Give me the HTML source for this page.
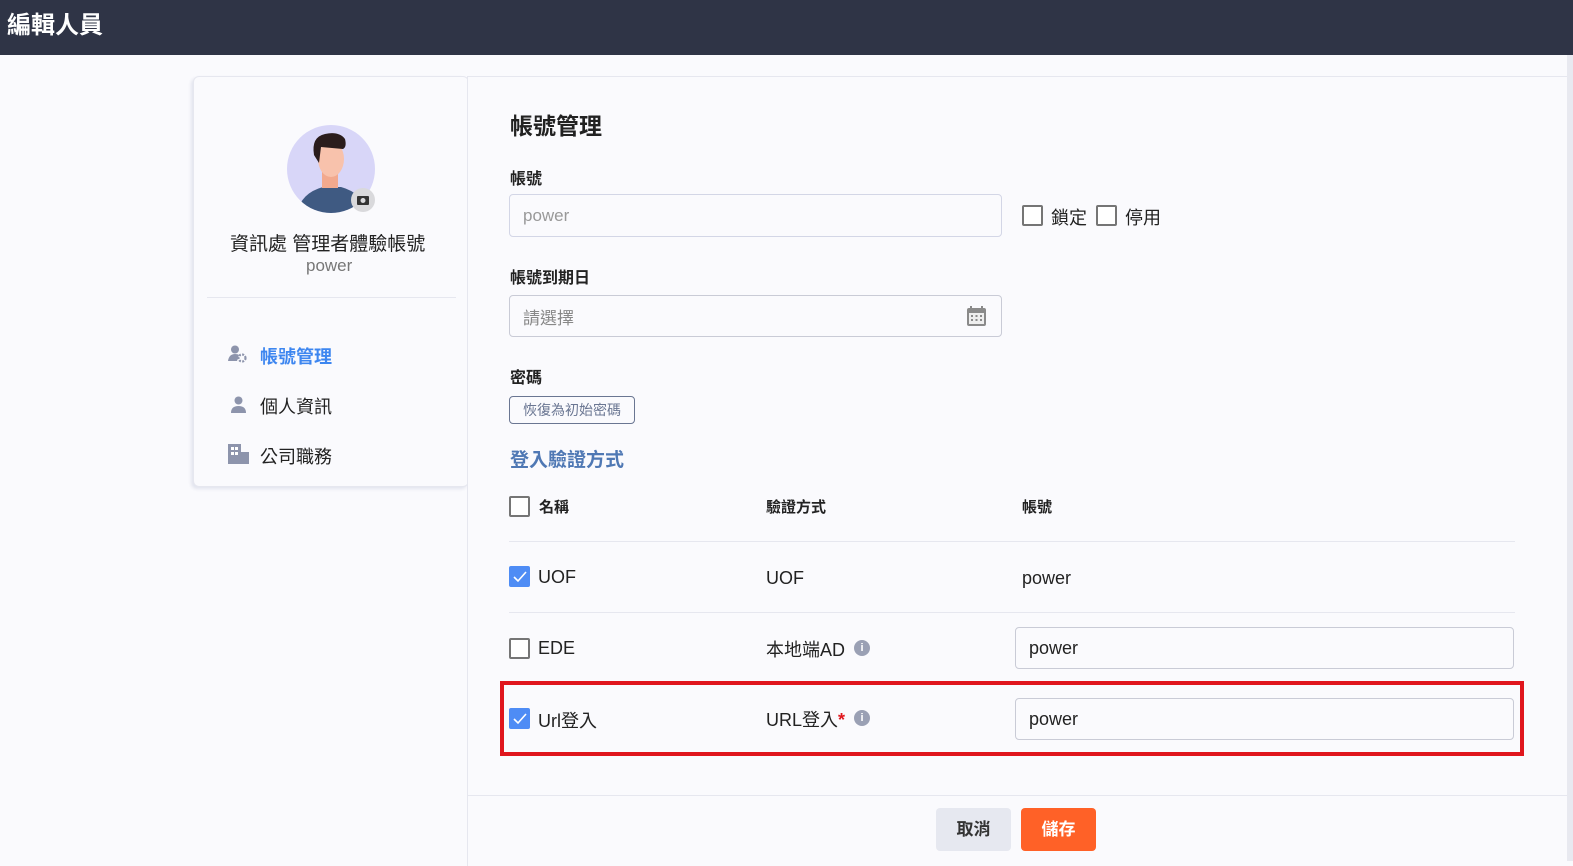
<!DOCTYPE html>
<html><head><meta charset="utf-8"><style>
*{box-sizing:border-box;margin:0;padding:0}
body{width:1573px;height:861px;overflow:hidden;background:#fafafd;font-family:"Liberation Sans","Noto Sans CJK TC",sans-serif;color:#222;position:relative}
.a{position:absolute}
.hdr{left:0;top:0;width:1573px;height:55px;background:#2f3446;color:#fff;font-size:24px;font-weight:bold;padding:5px 0 0 7px}
.left{left:193px;top:76px;width:276px;height:411px;background:#fafafd;border:1px solid #e6e7ef;border-radius:6px;box-shadow:-2px 2px 3px #e2e4ee}
.main{left:467px;top:76px;width:1101px;height:790px;background:#fafafd;border-left:1px solid #e6e7ef;border-top:1px solid #e6e7ef}
.t{font-size:17px;white-space:nowrap}
.inp{border:1px solid #c9cbd6;border-radius:4px;background:#fafafd;font-size:17px;color:#999;padding:0 13px;display:flex;align-items:center}
.cb{width:21px;height:21px;border:2px solid #757575;border-radius:2px;background:#fff}
.cbc{width:21px;height:21px;border-radius:2px;background:#4e8cf5}
.line{height:1px;background:#e6e7ef}
.info{width:16px;height:16px;border-radius:50%;background:#9aa0b4;color:#fff;font-size:11px;text-align:center;line-height:16px;font-weight:bold}
</style></head><body>
<div class="a hdr">編輯人員</div>
<div class="a left"></div>
<div class="a main"></div>
<div class="a" style="left:1567px;top:55px;width:6px;height:806px;background:#e8e9f0"></div>
<svg class="a" style="left:287px;top:125px" width="90" height="90" viewBox="0 0 90 90">
<circle cx="44" cy="44" r="44" fill="#d8d6f8"/>
<clipPath id="c"><circle cx="44" cy="44" r="44"/></clipPath>
<g clip-path="url(#c)">
<path d="M10 88 Q14 68 36 62 L54 62 Q76 68 80 88Z" fill="#3f5a82"/>
<rect x="35" y="45" width="16" height="18" fill="#f2a98e"/>
<ellipse cx="44" cy="34" rx="13" ry="18" fill="#f8c2ac"/>
<path d="M27 30 Q24 12 38 9 Q52 6 58 14 Q60 22 56 24 L34 22 L32 38 Z" fill="#2a1c1c"/>
</g>
<circle cx="76" cy="75" r="12" fill="#d9d9dc"/>
<rect x="70" y="71" width="12" height="9" rx="1" fill="#333"/><circle cx="76" cy="75.5" r="2.5" fill="#d9d9dc"/>
</svg>
<div class="a t" style="left:230px;top:229px;font-size:19px">資訊處 管理者體驗帳號</div>
<div class="a t" style="left:306px;top:256px;color:#777">power</div>
<div class="a line" style="left:207px;top:297px;width:249px"></div>
<svg class="a" style="left:228px;top:345px" width="20" height="18" viewBox="0 0 20 18"><circle cx="7" cy="4.5" r="4" fill="#8d94ac"/><path d="M0 16 Q1 9 7 9 Q10 9 11 10 L9 16Z" fill="#8d94ac"/><circle cx="14" cy="13" r="3.5" fill="none" stroke="#8d94ac" stroke-width="2.2" stroke-dasharray="2 1.3"/></svg>
<div class="a t" style="left:260px;top:343px;color:#3d86f0;font-weight:bold;font-size:18px">帳號管理</div>
<svg class="a" style="left:230px;top:396px" width="17" height="17" viewBox="0 0 17 17"><circle cx="8.5" cy="4.5" r="4" fill="#8d94ac"/><path d="M1 17 Q1 10 8.5 10 Q16 10 16 17Z" fill="#8d94ac"/></svg>
<div class="a t" style="left:260px;top:393px;font-size:18px">個人資訊</div>
<svg class="a" style="left:228px;top:444px" width="21" height="20" viewBox="0 0 21 20"><rect x="0" y="0" width="13" height="20" fill="#8d94ac"/><rect x="13" y="8" width="8" height="12" fill="#8d94ac"/><rect x="3" y="3" width="3" height="3" fill="#fff"/><rect x="7" y="3" width="3" height="3" fill="#fff"/><rect x="3" y="8" width="3" height="3" fill="#fff"/><rect x="7" y="8" width="3" height="3" fill="#fff"/></svg>
<div class="a t" style="left:260px;top:443px;font-size:18px">公司職務</div>

<div class="a t" style="left:510px;top:107px;font-size:23px;font-weight:bold">帳號管理</div>
<div class="a t" style="left:510px;top:165px;font-size:16px;font-weight:bold">帳號</div>
<div class="a inp" style="left:509px;top:194px;width:493px;height:43px;border-color:#d3d6e6">power</div>
<div class="a cb" style="left:1022px;top:205px"></div><div class="a t" style="left:1051px;top:204px;font-size:18px">鎖定</div>
<div class="a cb" style="left:1096px;top:205px"></div><div class="a t" style="left:1125px;top:204px;font-size:18px">停用</div>
<div class="a t" style="left:510px;top:264px;font-size:16px;font-weight:bold">帳號到期日</div>
<div class="a inp" style="left:509px;top:295px;width:493px;height:42px;color:#888">請選擇</div>
<svg class="a" style="left:967px;top:306px" width="19" height="20" viewBox="0 0 19 20"><rect x="0" y="2" width="19" height="18" rx="2" fill="#8a8a8a"/><rect x="3" y="0" width="2" height="4" fill="#8a8a8a"/><rect x="14" y="0" width="2" height="4" fill="#8a8a8a"/><rect x="2" y="7" width="15" height="11" fill="#eee"/><g fill="#8a8a8a"><rect x="4" y="9" width="2" height="2"/><rect x="8.5" y="9" width="2" height="2"/><rect x="13" y="9" width="2" height="2"/><rect x="4" y="13" width="2" height="2"/><rect x="8.5" y="13" width="2" height="2"/><rect x="13" y="13" width="2" height="2"/></g></svg>
<div class="a t" style="left:510px;top:364px;font-size:16px;font-weight:bold">密碼</div>
<div class="a" style="left:509px;top:396px;width:126px;height:28px;border:1px solid #6a7692;border-radius:4px;font-size:14px;color:#6a7692;text-align:center;line-height:26px">恢復為初始密碼</div>
<div class="a t" style="left:510px;top:445px;font-size:19px;color:#4f78b4;font-weight:bold">登入驗證方式</div>

<div class="a cb" style="left:509px;top:496px"></div><div class="a t" style="left:539px;top:496px;font-size:15px;font-weight:bold">名稱</div>
<div class="a t" style="left:766px;top:496px;font-size:15px;font-weight:bold">驗證方式</div>
<div class="a t" style="left:1022px;top:496px;font-size:15px;font-weight:bold">帳號</div>
<div class="a line" style="left:509px;top:541px;width:1006px"></div>
<div class="a cbc" style="left:509px;top:566px"></div><svg class="a" style="left:509px;top:566px" width="21" height="21"><path d="M5 11 L9 15 L17 6" stroke="#fff" stroke-width="1.6" fill="none"/></svg>
<div class="a t" style="left:538px;top:567px;font-size:18px">UOF</div>
<div class="a t" style="left:766px;top:568px;font-size:18px">UOF</div>
<div class="a t" style="left:1022px;top:568px;font-size:18px">power</div>
<div class="a line" style="left:509px;top:612px;width:1006px"></div>
<div class="a cb" style="left:509px;top:638px"></div>
<div class="a t" style="left:538px;top:638px;font-size:18px">EDE</div>
<div class="a t" style="left:766px;top:636px;font-size:18px">本地端AD</div>
<div class="a info" style="left:854px;top:640px">i</div>
<div class="a inp" style="left:1015px;top:627px;width:499px;height:42px;color:#222;font-size:18px">power</div>

<div class="a" style="left:500px;top:681px;width:1024px;height:75px;border:4px solid #e0161d"></div>
<div class="a cbc" style="left:509px;top:708px"></div><svg class="a" style="left:509px;top:708px" width="21" height="21"><path d="M5 11 L9 15 L17 6" stroke="#fff" stroke-width="1.6" fill="none"/></svg>
<div class="a t" style="left:538px;top:707px;font-size:18px">Url登入</div>
<div class="a t" style="left:766px;top:706px;font-size:18px">URL登入<span style="color:#e0161d;font-weight:bold">*</span></div>
<div class="a info" style="left:854px;top:710px">i</div>
<div class="a inp" style="left:1015px;top:698px;width:499px;height:42px;color:#222;font-size:18px">power</div>

<div class="a line" style="left:468px;top:795px;width:1099px"></div>
<div class="a" style="left:936px;top:808px;width:75px;height:43px;background:#e6e8f0;border-radius:4px;text-align:center;line-height:43px;font-size:17px;font-weight:bold;color:#333">取消</div>
<div class="a" style="left:1021px;top:808px;width:75px;height:43px;background:#ff6127;border-radius:4px;text-align:center;line-height:43px;font-size:17px;font-weight:bold;color:#fff">儲存</div>
</body></html>
